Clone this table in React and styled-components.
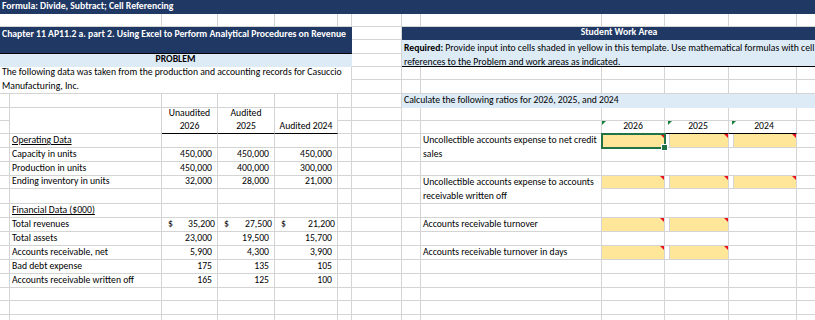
import React from "react";
import styled, { createGlobalStyle } from "styled-components";

const NAVY = "#1f3864";
const PALE = "#ddebf7";
const GOLD = "#ffe699";
const GRID = "#d4d4d4";

const COLS = [10, 152, 56, 57, 63, 14, 50, 19, 181, 63, 3, 61, 3, 65, 40];
const ROWS = [14, 13, 13, 14, 13, 13, 14, 14, 13, 13, 14, 14, 14, 13, 15, 14, 14, 14, 14, 14, 14, 13, 14, 14];

const Global = createGlobalStyle`
   body {
      margin: 0;
      background: #fff;
      overflow: hidden;
   }
`;

const Sheet = styled.div`
   display: grid;
   grid-template-columns: ${COLS.map((w) => w + "px").join(" ")};
   grid-template-rows: ${ROWS.map((h) => h + "px").join(" ")};
   width: ${COLS.reduce((a, b) => a + b, 0)}px;
   font-family: Calibri, Carlito, Lato, "Liberation Sans", sans-serif;
   font-size: 9.7px;
   color: #000;
`;

const JUSTIFY = { left: "flex-start", center: "center", right: "flex-end", between: "space-between" };

const Cell = styled.div`
   grid-column: ${(p) => p.$c + 1} / span ${(p) => p.$cs};
   grid-row: ${(p) => p.$r + 1} / span ${(p) => p.$rs};
   position: relative;
   display: flex;
   flex-direction: ${(p) => (p.$align === "between" ? "row" : "column")};
   justify-content: ${(p) => (p.$align === "between" ? "space-between" : p.$top ? "flex-start" : "flex-end")};
   align-items: ${(p) => (p.$align === "between" ? "flex-end" : JUSTIFY[p.$align])};
   box-sizing: border-box;
   padding: ${(p) => (p.$top ? "1px" : "0")} ${(p) => (p.$align === "right" ? "5px" : "2px")} 0 ${(p) => (p.$align === "between" ? "6px" : "2px")};
   background: ${(p) => p.$bg};
   border-right: 1px solid ${(p) => p.$line};
   border-bottom: 1px solid ${(p) => (p.$under ? "#000" : p.$line)};
   color: ${(p) => p.$fg};
   font-weight: ${(p) => (p.$bold ? 700 : 400)};
   text-decoration: ${(p) => (p.$u ? "underline" : "none")};
   white-space: pre;
   line-height: ${(p) => p.$lh}px;

   &::after {
      content: "";
      display: ${(p) => (p.$mark ? "block" : "none")};
      position: absolute;
      top: 0;
      ${(p) => (p.$mark === "note" ? "right: 0;" : "left: 0;")}
      width: 0;
      height: 0;
      border-top: 4px solid ${(p) => (p.$mark === "note" ? "#e81123" : "#17803a")};
      ${(p) => (p.$mark === "note" ? "border-left" : "border-right")}: 4px solid transparent;
   }
`;

const Line = styled.span`
   display: block;
`;

const Picked = styled.span`
   position: absolute;
   inset: -1px -2px -2px -1px;
   border: 2px solid #217346;
   pointer-events: none;
   z-index: 2;

   &::after {
      content: "";
      position: absolute;
      right: -4px;
      bottom: -4px;
      width: 5px;
      height: 5px;
      background: #217346;
      border: 1px solid #fff;
   }
`;

const Bold = styled.b`
   font-weight: 700;
`;

// kinds of cell: how each one looks
const KIND = {
   blank: {},
   title: { $bg: NAVY, $line: NAVY, $fg: "#fff", $bold: true },
   chapter: { $bg: NAVY, $line: NAVY, $fg: "#fff", $bold: true, $under: true, $top: true },
   work: { $bg: NAVY, $line: NAVY, $fg: "#fff", $bold: true, $align: "center" },
   band: { $bg: PALE, $line: PALE },
   problem: { $bg: PALE, $line: PALE, $bold: true, $align: "center" },
   req: { $bg: PALE, $line: PALE, $under: true, $top: true, $lh: 14 },
   para: { $line: GRID, $lh: 14 },
   head: { $align: "center", $under: true },
   under: { $under: true },
   year: { $align: "center", $under: true, $mark: "err" },
   label: {},
   uline: { $u: true },
   num: { $align: "right" },
   money: { $align: "between" },
   input: { $bg: GOLD, $mark: "note" },
   wrap: { $lh: 13.5 },
};

const operating = [
   ["Capacity in units", "450,000", "450,000", "450,000"],
   ["Production in units", "450,000", "400,000", "300,000"],
   ["Ending inventory in units", "32,000", "28,000", "21,000"],
];

const financial = [
   ["Total assets", "23,000", "19,500", "15,700"],
   ["Accounts receivable, net", "5,900", "4,300", "3,900"],
   ["Bad debt expense", "175", "135", "105"],
   ["Accounts receivable written off", "165", "125", "100"],
];

// [row, col, colSpan, rowSpan, kind, lines, picked]
const placed = [
   [0, 0, 15, 1, "title", ["Formula: Divide, Subtract; Cell Referencing"]],
   [1, 0, 2, 1, "blank"],
   [2, 0, 6, 2, "chapter", ["Chapter 11 AP11.2 a. part 2. Using Excel to Perform Analytical Procedures on Revenue"]],
   [2, 7, 8, 1, "work", ["Student Work Area"]],
   [
      3, 7, 8, 2, "req",
      [
         <>
            <Bold>Required:</Bold> Provide input into cells shaded in yellow in this template. Use mathematical formulas with cell
         </>,
         "references to the Problem and work areas as indicated.",
      ],
   ],
   [4, 0, 6, 1, "problem", ["PROBLEM"]],
   [5, 0, 6, 2, "para", ["The following data was taken from the production and accounting records for Casuccio", "Manufacturing, Inc."]],
   [7, 7, 8, 1, "band", ["Calculate the following ratios for 2026, 2025, and 2024"]],
   [8, 1, 1, 2, "blank"],
   [8, 2, 1, 2, "head", ["Unaudited", "2026"]],
   [8, 3, 1, 2, "head", ["Audited", "2025"]],
   [8, 4, 1, 2, "head", ["Audited 2024"]],
   [9, 9, 1, 1, "year", ["2026"]],
   [9, 10, 1, 1, "under"],
   [9, 11, 1, 1, "year", ["2025"]],
   [9, 12, 1, 1, "under"],
   [9, 13, 1, 1, "year", ["2024"]],
   [10, 1, 1, 1, "uline", ["Operating Data"]],
   [10, 8, 1, 2, "wrap", ["Uncollectible accounts expense to net credit", "sales"]],
   [10, 9, 1, 1, "input", null, true],
   [10, 11, 1, 1, "input"],
   [10, 13, 1, 1, "input"],
   ...operating.flatMap(([name, a, b, c], i) => [
      [11 + i, 1, 1, 1, "label", [name]],
      [11 + i, 2, 1, 1, "num", [a]],
      [11 + i, 3, 1, 1, "num", [b]],
      [11 + i, 4, 1, 1, "num", [c]],
   ]),
   [13, 8, 1, 2, "wrap", ["Uncollectible accounts expense to accounts", "receivable written off"]],
   [13, 9, 1, 1, "input"],
   [13, 11, 1, 1, "input"],
   [13, 13, 1, 1, "input"],
   [15, 1, 1, 1, "uline", ["Financial Data ($000)"]],
   [16, 1, 1, 1, "label", ["Total revenues"]],
   [16, 2, 1, 1, "money", ["$", "35,200"]],
   [16, 3, 1, 1, "money", ["$", "27,500"]],
   [16, 4, 1, 1, "money", ["$", "21,200"]],
   ...financial.flatMap(([name, a, b, c], i) => [
      [17 + i, 1, 1, 1, "label", [name]],
      [17 + i, 2, 1, 1, "num", [a]],
      [17 + i, 3, 1, 1, "num", [b]],
      [17 + i, 4, 1, 1, "num", [c]],
   ]),
   [16, 8, 1, 1, "label", ["Accounts receivable turnover"]],
   [16, 9, 1, 1, "input"],
   [16, 11, 1, 1, "input"],
   [18, 8, 1, 1, "label", ["Accounts receivable turnover in days"]],
   [18, 9, 1, 1, "input"],
   [18, 11, 1, 1, "input"],
];

const buildCells = () => {
   const taken = ROWS.map(() => COLS.map(() => false));
   placed.forEach(([r, c, cs, rs]) => {
      for (let y = r; y < r + rs; y++) for (let x = c; x < c + cs; x++) taken[y][x] = true;
   });
   const list = [...placed];
   ROWS.forEach((_, r) =>
      COLS.forEach((_, c) => {
         if (!taken[r][c]) list.push([r, c, 1, 1, "blank"]);
      })
   );
   return list;
};

export default function App() {
   return (
      <>
         <Global />
         <Sheet>
            {buildCells().map(([r, c, cs, rs, kind, lines, picked]) => {
               const look = { $bg: "#fff", $line: GRID, $fg: "#000", $align: "left", $lh: 13, ...KIND[kind] };
               return (
                  <Cell key={`${r}-${c}`} $r={r} $c={c} $cs={cs} $rs={rs} {...look}>
                     {(lines || []).map((line, i) => (
                        <Line key={i}>{line}</Line>
                     ))}
                     {picked && <Picked />}
                  </Cell>
               );
            })}
         </Sheet>
      </>
   );
}
